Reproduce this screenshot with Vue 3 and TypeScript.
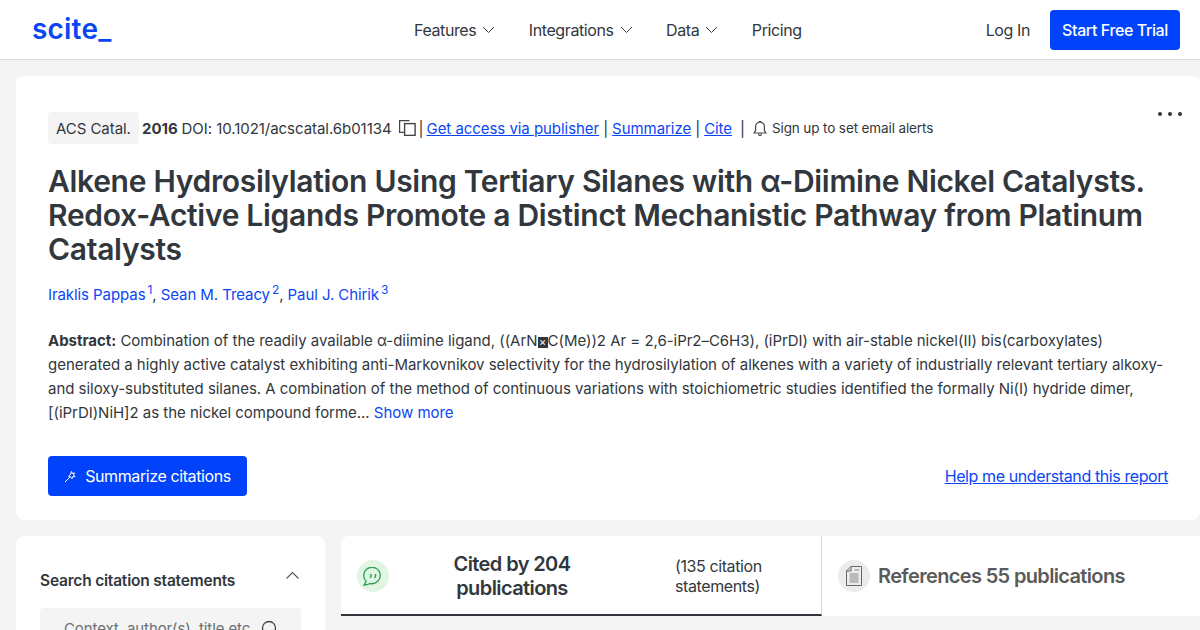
<script setup lang="ts">
const nav = [
  { label: 'Features', caret: true },
  { label: 'Integrations', caret: true },
  { label: 'Data', caret: true },
  { label: 'Pricing', caret: false },
]
const authors = [
  { name: 'Iraklis Pappas', n: 1 },
  { name: 'Sean M. Treacy', n: 2 },
  { name: 'Paul J. Chirik', n: 3 },
]
</script>

<template>
  <div class="page">
    <header class="top">
      <div class="logo">scite_</div>
      <nav class="nav">
        <a v-for="n in nav" :key="n.label" class="nav-item">
          {{ n.label }}
          <svg v-if="n.caret" width="13" height="8" viewBox="0 0 13 8" fill="none" stroke="#3b3f44" stroke-width="1"><path d="M1 1l5.500 5.500L12 1" /></svg>
        </a>
      </nav>
      <div class="actions">
        <a class="login">Log In</a>
        <a class="trial">Start Free Trial</a>
      </div>
    </header>

    <section class="card main">
      <div class="meta">
        <span class="journal">ACS Catal.</span>
        <b class="year">2016</b>
        <span class="doi">DOI: 10.1021/acscatal.6b01134</span>
        <svg class="copy" width="17" height="16" viewBox="0 0 17 16" fill="none" stroke="#444" stroke-width="1.200"><path d="M10.500 .6H.6v11.800H5" /><rect x="5.600" y="3.600" width="10.500" height="11.800" stroke-width="1.400" /></svg>
        <span class="sep first">|</span>
        <a class="link">Get access via publisher</a>
        <span class="sep">|</span>
        <a class="link">Summarize</a>
        <span class="sep">|</span>
        <a class="link">Cite</a>
        <span class="sep wide">|</span>
        <svg class="bell" width="14" height="17" viewBox="0 0 14 17" fill="none" stroke="#444" stroke-width="1.200"><path d="M1 13h12l-1.600-2.500V6.500a4.400 4.400 0 0 0-8.800 0v4z" /><path d="M6 1.500h2M5.800 13.500v1a1.200 1.200 0 0 0 2.400 0v-1" /></svg>
        <span class="alert">Sign up to set email alerts</span>
      </div>
      <div class="dots"><i></i><i></i><i></i></div>

      <h1 class="title">Alkene Hydrosilylation Using Tertiary Silanes with α-Diimine Nickel Catalysts. Redox-Active Ligands Promote a Distinct Mechanistic Pathway from Platinum Catalysts</h1>

      <div class="authors">
        <template v-for="(a, i) in authors" :key="a.name">
          <a class="author">{{ a.name }}<sup>{{ a.n }}</sup></a><span v-if="i < authors.length - 1" class="comma">, </span>
        </template>
      </div>

      <p class="abstract"><b>Abstract:</b> Combination of the readily available α-diimine ligand, ((ArN<span class="tofu">×</span>C(Me))2 Ar = 2,6-iPr2–C6H3), (iPrDI) with air-stable nickel(II) bis(carboxylates) generated a highly active catalyst exhibiting anti-Markovnikov selectivity for the hydrosilylation of alkenes with a variety of industrially relevant tertiary alkoxy- and siloxy-substituted silanes. A combination of the method of continuous variations with stoichiometric studies identified the formally Ni(I) hydride dimer, [(iPrDI)NiH]2 as the nickel compound forme... <a class="more">Show more</a></p>

      <div class="foot">
        <button class="summ">
          <svg width="13" height="13" viewBox="0 0 13 13" fill="none" stroke="#fff" stroke-width="1"><path d="M1 12l5-5" /><path d="M7.500 1.500l.6 2 2.400-.6-1 2.100 1.500 1.500-2.300.2-.7 2-1.300-1.800-2.100-.2 1.400-1.600z" /></svg>
          Summarize citations
        </button>
        <a class="help">Help me understand this report</a>
      </div>
    </section>

    <div class="lower">
      <aside class="card side">
        <div class="side-head">
          <span>Search citation statements</span>
          <svg width="13" height="7" viewBox="0 0 13 7" fill="none" stroke="#555" stroke-width="1.100"><path d="M.5 6.500l6-6 6 6" /></svg>
        </div>
        <div class="search">
          <span>Context, author(s), title etc.</span>
          <svg width="16" height="16" viewBox="0 0 16 16" fill="none" stroke="#444" stroke-width="1.300"><circle cx="8" cy="8" r="6.500" /></svg>
        </div>
      </aside>
      <div class="tabs">
        <div class="tab active">
          <span class="badge green">
            <svg width="20" height="19" viewBox="0 0 20 19" fill="none" stroke="#2e9e4f" stroke-width="1.300"><path d="M1 18l2.300-3.600A8.200 8.200 0 1 1 7.200 16.500C5.200 17.500 3 18 1 18z" /><path d="M8 7v2.200L7.200 11M12.500 7v2.200L11.700 11" stroke-width="1.500" /></svg>
          </span>
          <span class="cited">Cited by 204 publications</span>
          <span class="stmts">(135 citation statements)</span>
        </div>
        <div class="tab other">
          <span class="badge grey">
            <svg width="16" height="20" viewBox="0 0 16 20" fill="none" stroke="#666" stroke-width="1"><path d="M5 .5h10.500v19H.5V5z" /><path d="M5 .5V5H.5" /><path d="M8.500 4h4.500M3.500 8h9M3.500 10h9M3.500 12h9M3.500 14h9M3.500 16h9" stroke="#888" stroke-width="1.200" /></svg>
          </span>
          <span class="refs">References 55 publications</span>
        </div>
      </div>
    </div>
  </div>
</template>

<style>
html, body { margin: 0; background: #f4f4f4; }
</style>

<style scoped>
.page {
  width: 1200px;
  height: 630px;
  overflow: hidden;
  background: #f4f4f4;
  font-family: Inter, "Liberation Sans", sans-serif;
  color: #32373d;
}
.top {
  height: 59px;
  background: #fff;
  border-bottom: 1px solid #dcdcdc;
  display: flex;
  align-items: center;
  padding: 0 20px 0 32px;
}
.logo {
  font-size: 28px;
  font-weight: 600;
  color: #0b46f5;
  width: 382px;
  letter-spacing: 0.2px;
  line-height: 59px;
}
.nav { display: flex; gap: 33.500px; font-size: 16px; flex: 1; letter-spacing: -0.4px; }
.nav-item { display: flex; align-items: center; gap: 6px; color: #32373d; }
.actions { display: flex; align-items: center; gap: 20px; font-size: 16px; letter-spacing: -0.4px; }
.login { color: #32373d; }
.trial {
  background: #0043fb;
  color: #fff;
  border-radius: 4px;
  height: 40px;
  width: 130px;
  font-weight: 500;
  display: flex;
  align-items: center;
  justify-content: center;
}
.card { background: #fff; border-radius: 8px; }
.main {
  margin: 16px 0 0 16px;
  width: 1184px;
  height: 444px;
  box-sizing: border-box;
  padding: 36px 32px 0;
  position: relative;
}
.meta { display: flex; align-items: center; font-size: 15px; letter-spacing: -0.05px; height: 32px; white-space: nowrap; }
.journal {
  background: #f4f4f4;
  border-radius: 4px;
  height: 32px;
  width: 91px;
  box-sizing: border-box;
  padding: 0 8px;
  display: flex;
  align-items: center;
  margin-right: 3px;
}
.year { font-weight: 700; margin-right: 4px; }
.copy { margin: 0 0 0 7px; }
.sep { margin: 0 4px; }
.sep.first { margin: 0 3px; }
.sep.wide { margin: 0 8px; }
.link { color: #0b46f5; text-decoration: underline; }
.alert { font-size: 13.500px; margin-left: 5px; letter-spacing: -0.12px; }
.dots { position: absolute; right: 18px; top: 36px; display: flex; gap: 6px; }
.dots i { width: 4px; height: 4px; border-radius: 50%; background: #32373d; }
.title {
  font-size: 30px;
  line-height: 34px;
  font-weight: 600;
  margin: 20px 0 0;
  letter-spacing: -0.3px;
  width: 1110px;
}
.authors { margin-top: 17px; font-size: 15px; letter-spacing: -0.08px; line-height: 24px; color: #0b46f5; }
.author sup { font-size: 12px; line-height: 0; margin-left: 2px; }
.comma { color: #32373d; }
.abstract {
  margin: 22px 0 0;
  font-size: 15px;
  line-height: 24px;
  letter-spacing: -0.03px;
  width: 1122px;
}
.abstract b { font-weight: 700; }
.tofu {
  display: inline-block;
  width: 10px;
  height: 11px;
  background: #32373d;
  color: #fff;
  font-size: 11px;
  line-height: 11px;
  text-align: center;
  letter-spacing: 0;
}
.more { color: #0b46f5; }
.foot {
  margin-top: 31px;
  display: flex;
  align-items: center;
  justify-content: space-between;
}
.summ {
  background: #0043fb;
  color: #fff;
  border: 0;
  border-radius: 4px;
  width: 199px;
  height: 40px;
  display: flex;
  align-items: center;
  justify-content: center;
  gap: 8px;
  font: inherit;
  font-size: 16px;
  letter-spacing: -0.4px;
}
.help { color: #0b46f5; text-decoration: underline; font-size: 16px; letter-spacing: -0.4px; }
.lower { display: flex; gap: 16px; margin: 16px 0 0 16px; }
.side { width: 309px; height: 200px; padding: 32px 24px; box-sizing: border-box; }
.side-head {
  display: flex;
  justify-content: space-between;
  align-items: flex-start;
  font-weight: 600;
  font-size: 15.500px;
  letter-spacing: -0.2px;
  line-height: 26px;
}
.side-head svg { margin: 4px 2px 0 0; }
.search {
  margin-top: 14px;
  background: #f4f4f4;
  border-radius: 4px;
  height: 40px;
  padding: 0 24px;
  display: flex;
  align-items: center;
  justify-content: space-between;
  font-size: 15px;
  letter-spacing: -0.1px;
  color: #6b7075;
  white-space: nowrap;
}
.tabs { display: flex; width: 859px; height: 80px; background: #fff; border-radius: 8px 0 0 0; }
.tab { display: flex; align-items: center; box-sizing: border-box; }
.active {
  width: 481px;
  border-right: 1px solid #dcdcdc;
  border-bottom: 2px solid #32373d;
  padding: 2px 0 0 16px;
}
.other { flex: 1; padding-left: 16px; }
.badge {
  width: 32px;
  height: 32px;
  border-radius: 50%;
  display: flex;
  align-items: center;
  justify-content: center;
  flex: none;
}
.green { background: #e0f5e2; }
.grey { background: #ececec; }
.cited {
  width: 160px;
  margin-left: 43px;
  text-align: center;
  font-size: 20px;
  line-height: 24px;
  font-weight: 600;
  letter-spacing: -0.6px;
}
.stmts {
  margin-left: 83px;
  width: 110px;
  font-size: 16px;
  line-height: 20px;
  letter-spacing: -0.4px;
}
.refs { margin-left: 8px; font-size: 20px; font-weight: 600; letter-spacing: -0.65px; color: #5a5a5a; }
</style>
